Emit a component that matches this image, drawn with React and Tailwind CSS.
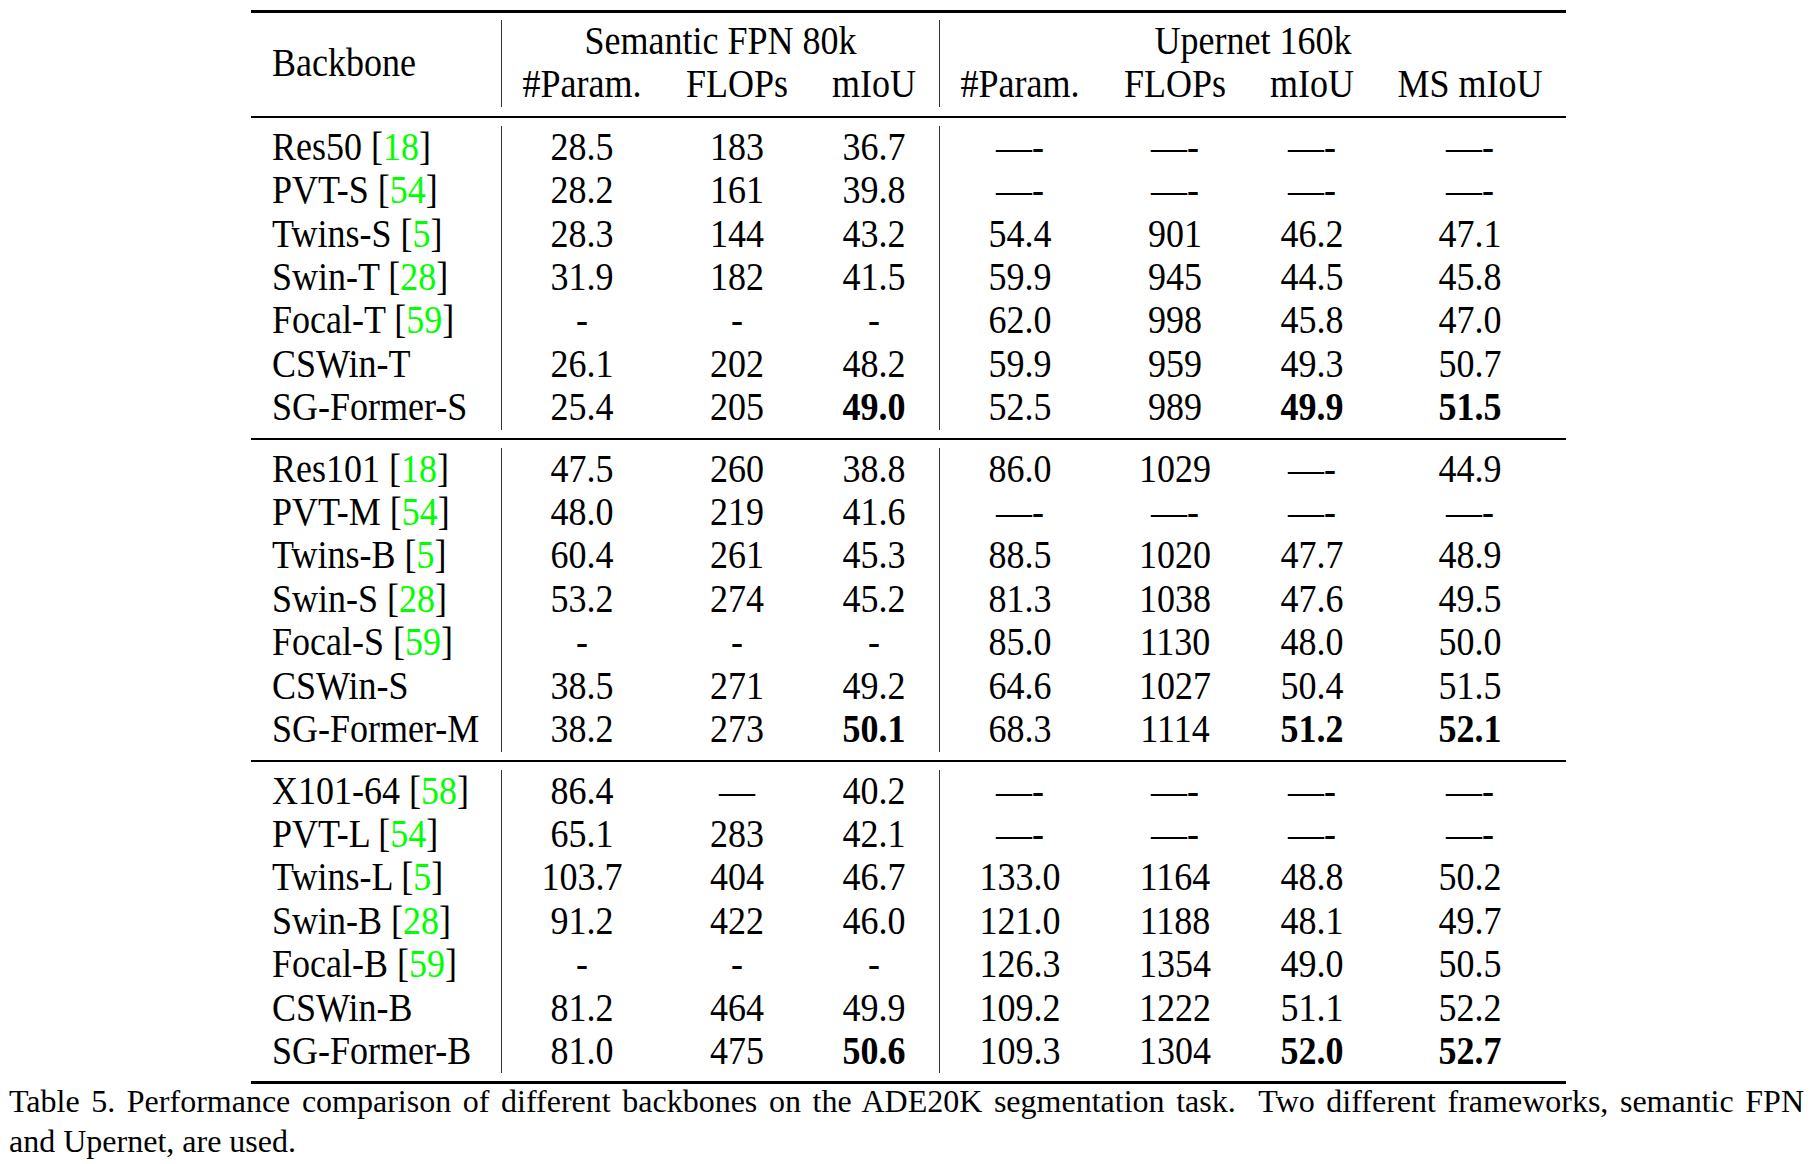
const D = "—-";

const groups = [
  [
    ["Res50", "18", "28.5", "183", "36.7", D, D, D, D],
    ["PVT-S", "54", "28.2", "161", "39.8", D, D, D, D],
    ["Twins-S", "5", "28.3", "144", "43.2", "54.4", "901", "46.2", "47.1"],
    ["Swin-T", "28", "31.9", "182", "41.5", "59.9", "945", "44.5", "45.8"],
    ["Focal-T", "59", "-", "-", "-", "62.0", "998", "45.8", "47.0"],
    ["CSWin-T", null, "26.1", "202", "48.2", "59.9", "959", "49.3", "50.7"],
    ["SG-Former-S", null, "25.4", "205", "49.0", "52.5", "989", "49.9", "51.5"],
  ],
  [
    ["Res101", "18", "47.5", "260", "38.8", "86.0", "1029", D, "44.9"],
    ["PVT-M", "54", "48.0", "219", "41.6", D, D, D, D],
    ["Twins-B", "5", "60.4", "261", "45.3", "88.5", "1020", "47.7", "48.9"],
    ["Swin-S", "28", "53.2", "274", "45.2", "81.3", "1038", "47.6", "49.5"],
    ["Focal-S", "59", "-", "-", "-", "85.0", "1130", "48.0", "50.0"],
    ["CSWin-S", null, "38.5", "271", "49.2", "64.6", "1027", "50.4", "51.5"],
    ["SG-Former-M", null, "38.2", "273", "50.1", "68.3", "1114", "51.2", "52.1"],
  ],
  [
    ["X101-64", "58", "86.4", "—", "40.2", D, D, D, D],
    ["PVT-L", "54", "65.1", "283", "42.1", D, D, D, D],
    ["Twins-L", "5", "103.7", "404", "46.7", "133.0", "1164", "48.8", "50.2"],
    ["Swin-B", "28", "91.2", "422", "46.0", "121.0", "1188", "48.1", "49.7"],
    ["Focal-B", "59", "-", "-", "-", "126.3", "1354", "49.0", "50.5"],
    ["CSWin-B", null, "81.2", "464", "49.9", "109.2", "1222", "51.1", "52.2"],
    ["SG-Former-B", null, "81.0", "475", "50.6", "109.3", "1304", "52.0", "52.7"],
  ],
];

// bold cells on the SG-Former rows
const BOLD = [4, 7, 8];

function Cell({ children, bold }) {
  return <div className={bold ? "text-center font-bold" : "text-center"}>{children}</div>;
}

function Group({ rows }) {
  return (
    <div className="flex pt-[8px] pb-[8px]">
      <div className="w-[251px] pl-[21px]">
        {rows.map((r) => (
          <div key={r[0]} className="whitespace-nowrap scale-y-[1.09]">
            {r[0]}
            {r[1] && (
              <>
                {" "}[<span className="text-[#00ff00]">{r[1]}</span>]
              </>
            )}
          </div>
        ))}
      </div>
      <div className="w-[438px] border-l border-[#333] pr-[4px]">
        {rows.map((r, i) => (
          <div key={i} className="grid grid-cols-[160px_150px_124px] scale-y-[1.09]">
            {[2, 3, 4].map((k) => (
              <Cell key={k} bold={i === rows.length - 1 && BOLD.includes(k)}>
                {r[k]}
              </Cell>
            ))}
          </div>
        ))}
      </div>
      <div className="flex-1 border-l border-[#333]">
        {rows.map((r, i) => (
          <div key={i} className="grid grid-cols-[160px_150px_124px_192px] scale-y-[1.09]">
            {[5, 6, 7, 8].map((k) => (
              <Cell key={k} bold={i === rows.length - 1 && BOLD.includes(k)}>
                {r[k]}
              </Cell>
            ))}
          </div>
        ))}
      </div>
    </div>
  );
}

export default function App() {
  return (
    <div className="min-h-screen bg-white text-black [font-family:'Liberation_Serif',serif]">
      <div className="pt-[10px] pl-[251px] pr-[247px]">
        <div className="text-[36px] leading-[43.4px]">
          <div className="h-[3px] bg-black" />
          <div className="flex pt-[7px] pb-[9px]">
            <div className="w-[251px] pl-[21px] flex items-center">
              <span className="scale-y-[1.09]">Backbone</span>
            </div>
            <div className="w-[438px] border-l border-[#333] pr-[4px]">
              <div className="text-center pl-[4px] scale-y-[1.09]">Semantic FPN 80k</div>
              <div className="grid grid-cols-[160px_150px_124px] scale-y-[1.09]">
                <Cell>#Param.</Cell>
                <Cell>FLOPs</Cell>
                <Cell>mIoU</Cell>
              </div>
            </div>
            <div className="flex-1 border-l border-[#333]">
              <div className="text-center scale-y-[1.09]">Upernet 160k</div>
              <div className="grid grid-cols-[160px_150px_124px_192px] scale-y-[1.09]">
                <Cell>#Param.</Cell>
                <Cell>FLOPs</Cell>
                <Cell>mIoU</Cell>
                <Cell>MS mIoU</Cell>
              </div>
            </div>
          </div>
          {groups.map((g, i) => (
            <div key={i}>
              <div className="h-[2px] bg-black" />
              <Group rows={g} />
            </div>
          ))}
          <div className="h-[3px] bg-black" />
        </div>
      </div>
      <div className="px-[9px] text-[32px] leading-[40px] -mt-[3px]">
        <div className="text-justify [text-align-last:justify]">
          Table 5. Performance comparison of different backbones on the ADE20K segmentation task.&nbsp; Two different frameworks, semantic FPN
        </div>
        <div>and Upernet, are used.</div>
      </div>
    </div>
  );
}
